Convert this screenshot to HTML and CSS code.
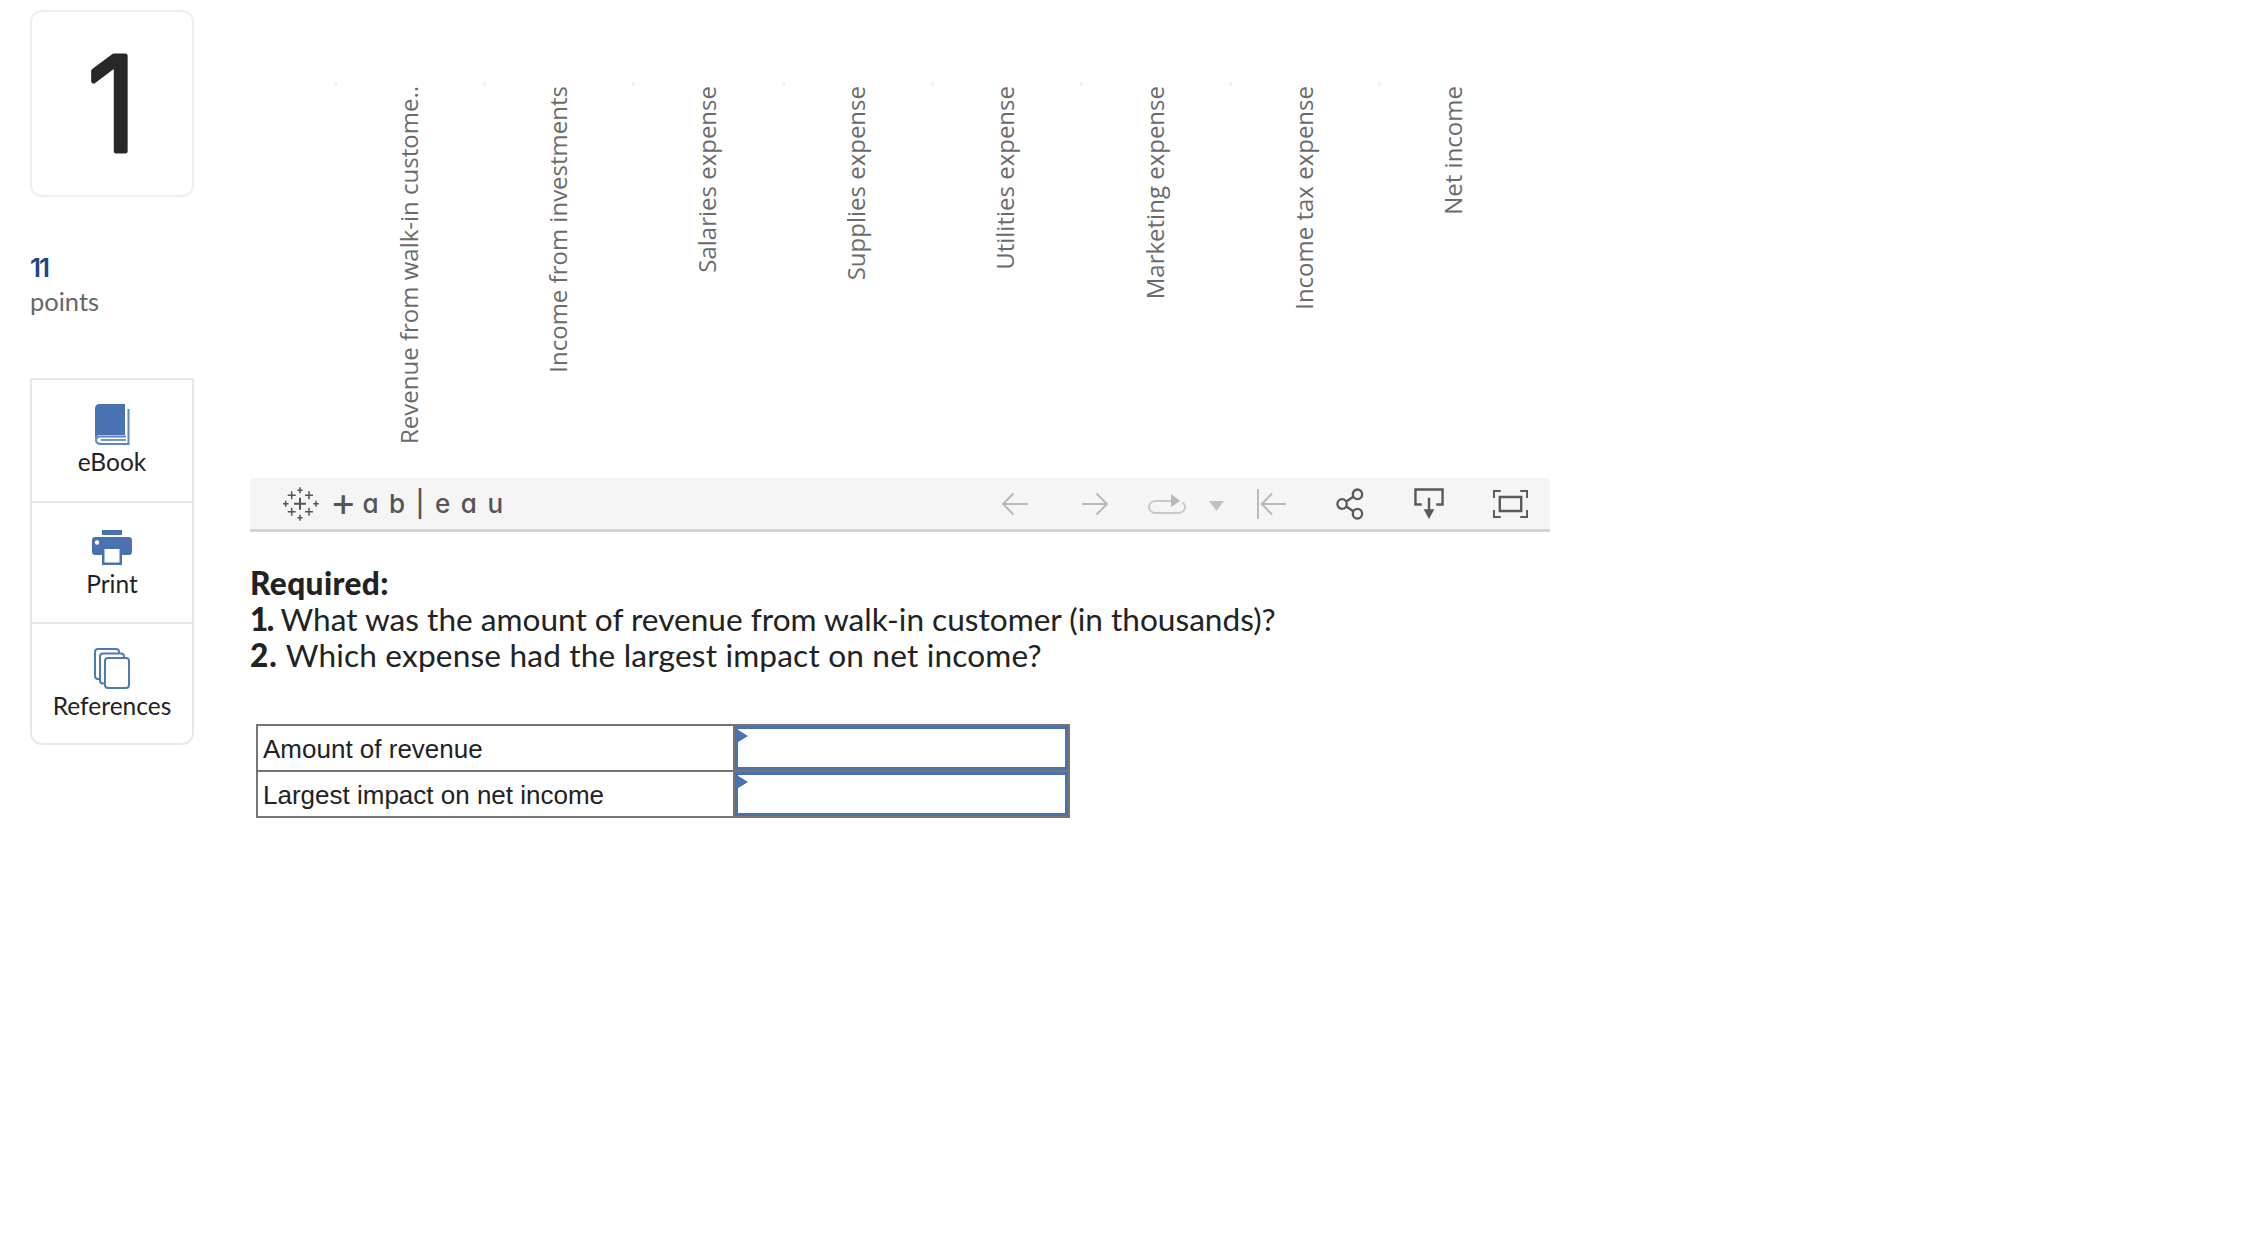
FILE: index.html
```html
<!DOCTYPE html>
<html lang="en">
<head>
<meta charset="utf-8">
<title>Question 1</title>
<link rel="stylesheet" href="styles.css">
</head>
<body>
<div class="page">
  <aside class="side">
    <div class="qnum"><svg viewBox="0 0 160 183" width="160" height="183"><text x="80" y="139" text-anchor="middle">1</text></svg></div>
    <div class="score"><div class="pts">11</div><div class="ptl">points</div></div>
    <nav class="tools">
      <div class="tool">
        <svg class="ic-book" viewBox="0 0 35 41" width="35" height="41"><path fill="#4a72b0" d="M4 0H30V31H5C2.500 31 0 33 0 36V4C0 2 2 0 4 0Z"/><path fill="none" stroke="#5f86c2" stroke-width="2" d="M33.500 5V40H6C3 40 1 38.500 1 36C1 33.500 3 32.500 5 32.500H31"/><path fill="none" stroke="#4a72b0" stroke-width="1.500" d="M6 36H31"/></svg>
        <span>eBook</span>
      </div>
      <div class="tool">
        <svg class="ic-print" viewBox="0 0 40 35" width="40" height="35"><path fill="#4a72b0" d="M10 0H30V5H10Z"/><path fill="#4a72b0" d="M3 7H37C38.700 7 40 8.300 40 10V22C40 24 38.700 25 37 25H30V35H10V25H3C1.300 25 0 24 0 22V10C0 8.300 1.300 7 3 7Z"/><circle cx="5" cy="12.500" r="2.200" fill="#fff"/><path fill="#fff" d="M12.500 19H27.500V32.500H12.500Z"/></svg>
        <span>Print</span>
      </div>
      <div class="tool">
        <svg class="ic-refs" viewBox="0 0 36 41" width="36" height="41"><g fill="#fff" stroke="#4f78b6" stroke-width="2"><rect x="1" y="1" width="24" height="30" rx="3"/><rect x="6" y="5.500" width="24" height="30" rx="3"/><rect x="11" y="10" width="24" height="30" rx="3"/></g></svg>
        <span>References</span>
      </div>
    </nav>
  </aside>

  <main class="main">
    <section class="chart">
      <div class="col"><i class="tick"></i><span class="lab">Revenue from walk-in custome..</span></div>
      <div class="col"><i class="tick"></i><span class="lab">Income from investments</span></div>
      <div class="col"><i class="tick"></i><span class="lab">Salaries expense</span></div>
      <div class="col"><i class="tick"></i><span class="lab">Supplies expense</span></div>
      <div class="col"><i class="tick"></i><span class="lab">Utilities expense</span></div>
      <div class="col"><i class="tick"></i><span class="lab">Marketing expense</span></div>
      <div class="col"><i class="tick"></i><span class="lab">Income tax expense</span></div>
      <div class="col"><i class="tick"></i><span class="lab">Net income</span></div>
    </section>

    <div class="bar">
      <svg class="mark" viewBox="0 0 36 34" width="36" height="34"><g fill="none" stroke="#555" stroke-width="1.500"><path d="M17 .3V6.300M14.500 3.300H19.500"/><path d="M8.700 4.300V12.300M4.700 8.300H12.700"/><path d="M26 4.300V12.300M22 8.300H30"/><path d="M2.700 13.700V19.700M0 16.700H5.500"/><path stroke-width="2" d="M17 10.700V22.700M11 16.700H23"/><path d="M33 13.700V19.700M30.300 16.700H35.700"/><path d="M8.700 20.700V28.700M4.700 24.700H12.700"/><path d="M26 20.700V28.700M22 24.700H30"/><path d="M17 27.700V33.700M14.500 30.700H19.500"/></g></svg>
      <span class="word"><span class="plus">+</span>ab|eau</span>
      <div class="btns">
        <svg class="b-back" viewBox="0 0 27 24" width="27" height="24"><path fill="none" stroke="#b8b8b8" stroke-width="2" d="M27 12H2M12.500 1.500L2 12L12.500 22.500"/></svg>
        <svg class="b-fwd" viewBox="0 0 27 24" width="27" height="24"><path fill="none" stroke="#b8b8b8" stroke-width="2" d="M0 12H25M14.500 1.500L25 12L14.500 22.500"/></svg>
        <svg class="b-redo" viewBox="0 0 38 20" width="38" height="20"><path fill="none" stroke="#c8c8c8" stroke-width="2" d="M24 7H8C4 7 1 9.500 1 13C1 16.500 4 19 8 19H30C34 19 37 16.500 37 13C37 11 36 9.500 34.500 8.500"/><path fill="#b8b8b8" d="M23 0L32 7L23 13Z"/></svg>
        <svg class="b-caret" viewBox="0 0 16 10" width="15" height="10" preserveAspectRatio="none"><path fill="#c0c0c0" d="M0 0H16L8 10Z"/></svg>
        <svg class="b-first" viewBox="0 0 30 30" width="29" height="30" preserveAspectRatio="none"><path fill="none" stroke="#b8b8b8" stroke-width="2" d="M1 0V30M30 15H5M15.500 4.500L5 15L15.500 25.500"/></svg>
        <svg class="b-share" viewBox="0 0 30 33" width="28" height="32" preserveAspectRatio="none"><g fill="none" stroke="#5a5a5a" stroke-width="2.500"><circle cx="6.500" cy="16.500" r="5"/><circle cx="23" cy="6.500" r="5"/><circle cx="23" cy="26.500" r="5"/><path d="M11 14L18.500 9M11 19L18.500 24"/></g></svg>
        <svg class="b-down" viewBox="0 0 31 32" width="30" height="31" preserveAspectRatio="none"><path fill="none" stroke="#5a5a5a" stroke-width="2.500" d="M8 17H1.500V1.500H29.500V17H23M15.500 10V24"/><path fill="#5a5a5a" d="M10 22H21L15.500 32Z"/></svg>
        <svg class="b-full" viewBox="0 0 36 28" width="35" height="28" preserveAspectRatio="none"><g fill="none" stroke="#5a5a5a" stroke-width="2"><path d="M1 8V1H8M28 1H35V8M1 20V27H8M28 27H35V20"/></g><rect x="7" y="7" width="22" height="14" fill="none" stroke="#5a5a5a" stroke-width="2.500"/></svg>
      </div>
    </div>

    <div class="req">
      <p class="q0"><b>Required:</b></p>
      <p class="q1"><b>1.</b> What was the amount of revenue from walk-in customer (in thousands)?</p>
      <p class="q2"><b>2.</b> Which expense had the largest impact on net income?</p>
    </div>

    <table class="ans">
      <tr><td class="name">Amount of revenue</td><td class="cell"><div class="input"></div></td></tr>
      <tr><td class="name">Largest impact on net income</td><td class="cell"><div class="input"></div></td></tr>
    </table>
  </main>
</div>
</body>
</html>
```
FILE: styles.css
```css
* { box-sizing: border-box; }
html, body { margin: 0; padding: 0; background: #fff; }
body { font-family: "Lato", "Noto Sans", sans-serif; color: #222; }
p { margin: 0; }
.page { display: flex; width: 2252px; height: 1254px; overflow: hidden; }

.side { width: 250px; padding-left: 30px; padding-top: 10px; flex: none; display: flex; flex-direction: column; }
.qnum { width: 164px; height: 187px; border: 2px solid #efefef; border-radius: 12px; }
.qnum svg { display: block; }
.qnum text { font-family: "Inter", sans-serif; font-size: 130px; font-weight: 300; fill: #282828; stroke: #282828; stroke-width: 5px; stroke-linejoin: round; }
.score { margin-top: 56px; height: 69px; }
.pts { font-family: "Inter", sans-serif; font-size: 26px; line-height: 30px; color: #1f4484; font-weight: 600; letter-spacing: -2px; }
.ptl { font-size: 25.500px; line-height: 36px; color: #666; }
.tools { margin-top: 56px; width: 164px; height: 367px; border: 2px solid #e8e8e8; border-radius: 0 0 12px 12px; display: flex; flex-direction: column; }
.tool { height: 122px; display: flex; flex-direction: column; align-items: center; padding-top: 24px; font-size: 24.500px; line-height: 30px; }
.tool + .tool { border-top: 2px solid #e8e8e8; height: 122px; }
.tool span { margin-top: 2px; }
.ic-print { margin-top: 3px; margin-bottom: 2px; }
.tool svg { display: block; flex: none; }

.main { flex: 1; min-width: 0; }
.chart { height: 478px; padding-top: 82px; padding-left: 84px; display: flex; }
.col { width: 149.200px; display: flex; flex-direction: column; }
.tick { display: block; width: 3px; height: 4px; background: #f2f2f2; flex: none; }
.lab { writing-mode: vertical-rl; transform: rotate(180deg); align-self: center; font-family: "Open Sans", sans-serif; font-size: 24px; line-height: 28px; color: #6b6b6b; white-space: nowrap; }

.bar { width: 1300px; height: 54px; background: #f5f5f5; border-bottom: 3px solid #d4d4d4; display: flex; align-items: center; padding-left: 33px; padding-right: 22px; }
.bar svg { display: block; flex: none; }
.mark { margin-right: 11px; }
.word { font-family: "Inter", sans-serif; font-feature-settings: "cv11"; font-size: 26px; letter-spacing: 10.500px; color: #555; line-height: 1; font-weight: 500; margin-bottom: 3px; }
.plus { font-size: 40px; font-weight: 400; letter-spacing: 6px; line-height: 1; vertical-align: -3px; }
.btns { margin-left: auto; display: flex; align-items: center; }
.b-fwd { margin-left: 54px; }
.b-redo { margin-left: 39px; }
.b-caret { margin-left: 23px; margin-top: 4px; }
.b-first { margin-left: 33px; }
.b-share { margin-left: 50px; }
.b-down { margin-left: 50px; }
.b-full { margin-left: 49px; }

.req { margin-top: 33px; font-size: 31.600px; line-height: 36px; color: #222; }
.req b { font-weight: 900; }
.q0 b { letter-spacing: .4px; }
.q1 b { letter-spacing: -1.500px; }
.q2 { letter-spacing: .18px; }
.q2 b { letter-spacing: 1px; }
.ans { margin-top: 51px; margin-left: 6px; border-collapse: collapse; width: 814px; font-family: "Liberation Sans", Arial, sans-serif; font-size: 26px; color: #222; table-layout: fixed; }
.ans td { border: 2px solid #757575; height: 46px; padding: 0; }
.name { width: 477px; padding-left: 5px !important; padding-top: 2px !important; }
.cell { position: relative; }
.input { position: relative; height: 44px; border: 3px solid #4a72b0; }
.input::before { content: ""; position: absolute; left: -3px; top: -1px; width: 0; height: 0; border-left: 13px solid #4a72b0; border-top: 8px solid transparent; border-bottom: 8px solid transparent; }
```
